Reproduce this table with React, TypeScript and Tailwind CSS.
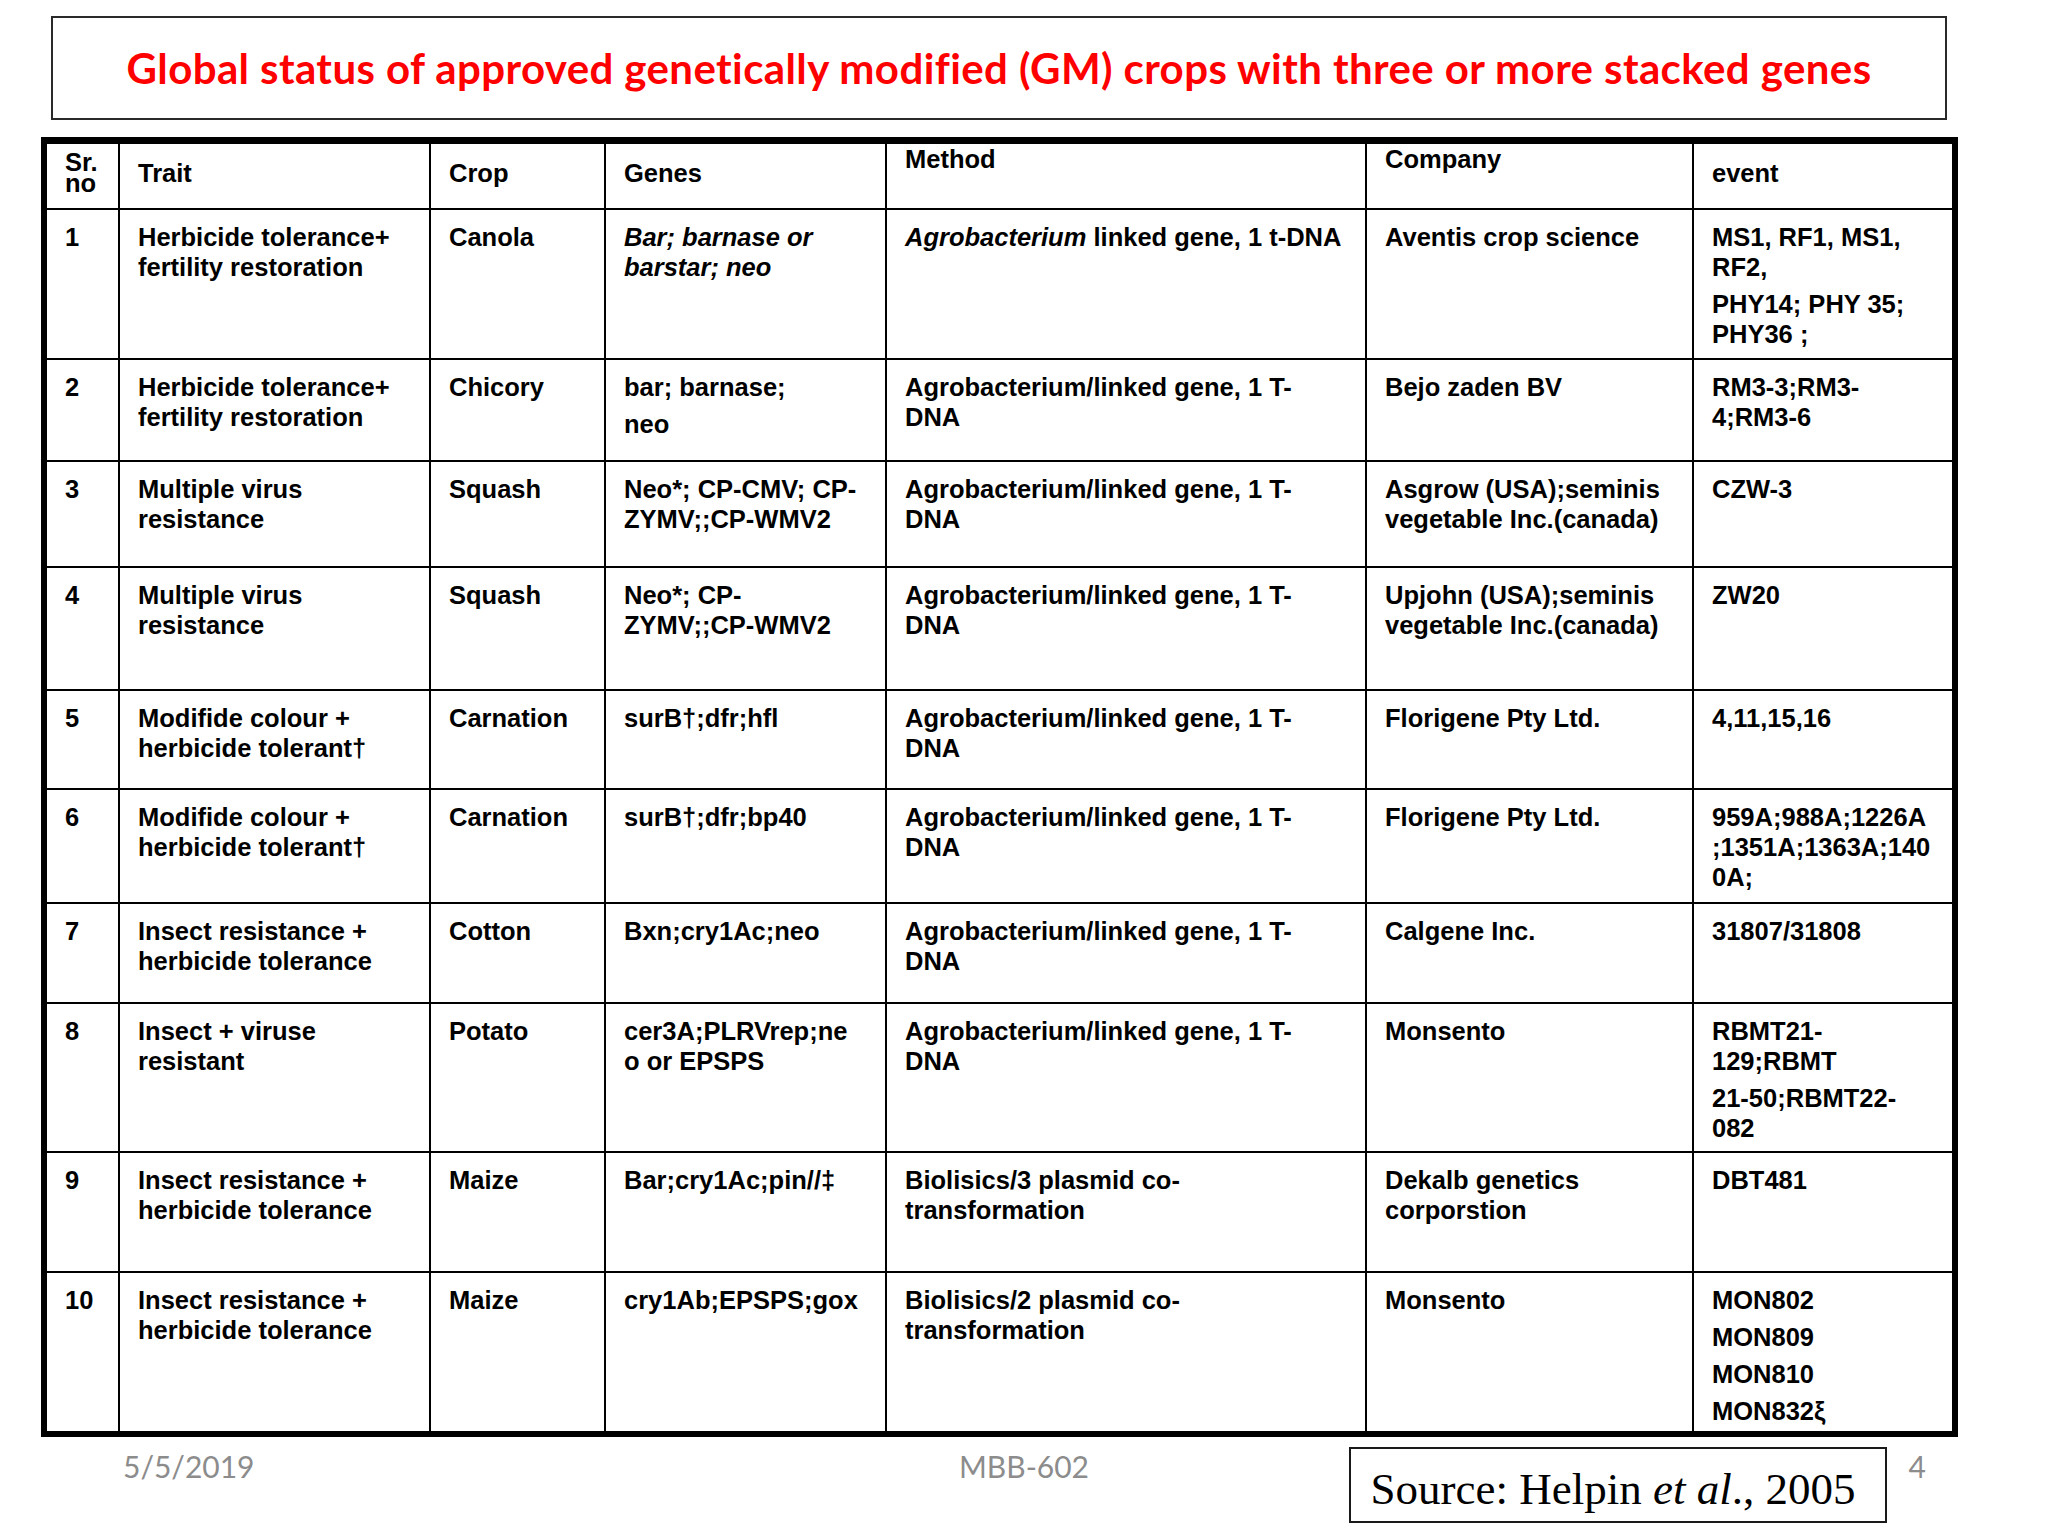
import React from "react";

type Para = React.ReactNode[];
type CellData = Para[];

const L = (...lines: React.ReactNode[]): CellData => [lines];
const Ps = (...paras: React.ReactNode[][]): CellData => paras;

function Cell({ data }: { data: CellData }) {
  return (
    <div className="bg-white pl-[18px] pt-[12px] text-[25.5px] leading-[30px] font-bold text-black">
      {data.map((p, i) => (
        <div key={i} className={i > 0 ? "mt-[7px]" : ""}>
          {p.map((l, j) => (
            <div key={j} className="whitespace-nowrap">
              {l}
            </div>
          ))}
        </div>
      ))}
    </div>
  );
}

const AGRO = L("Agrobacterium/linked gene, 1 T-", "DNA");

const rows: CellData[][] = [
  [
    L("1"),
    L("Herbicide tolerance+", "fertility restoration"),
    L("Canola"),
    L(<i>Bar; barnase or</i>, <i>barstar; neo</i>),
    L(
      <>
        <i>Agrobacterium</i> linked gene, 1 t-DNA
      </>
    ),
    L("Aventis crop science"),
    Ps(["MS1, RF1, MS1,", "RF2,"], ["PHY14; PHY 35;", "PHY36 ;"]),
  ],
  [
    L("2"),
    L("Herbicide tolerance+", "fertility restoration"),
    L("Chicory"),
    Ps(["bar; barnase;"], ["neo"]),
    AGRO,
    L("Bejo zaden BV"),
    L("RM3-3;RM3-", "4;RM3-6"),
  ],
  [
    L("3"),
    L("Multiple virus", "resistance"),
    L("Squash"),
    L("Neo*; CP-CMV; CP-", "ZYMV;;CP-WMV2"),
    AGRO,
    L("Asgrow (USA);seminis", "vegetable Inc.(canada)"),
    L("CZW-3"),
  ],
  [
    L("4"),
    L("Multiple virus", "resistance"),
    L("Squash"),
    L("Neo*; CP-", "ZYMV;;CP-WMV2"),
    AGRO,
    L("Upjohn (USA);seminis", "vegetable Inc.(canada)"),
    L("ZW20"),
  ],
  [
    L("5"),
    L("Modifide colour +", "herbicide tolerant†"),
    L("Carnation"),
    L("surB†;dfr;hfl"),
    AGRO,
    L("Florigene Pty Ltd."),
    L("4,11,15,16"),
  ],
  [
    L("6"),
    L("Modifide colour +", "herbicide tolerant†"),
    L("Carnation"),
    L("surB†;dfr;bp40"),
    AGRO,
    L("Florigene Pty Ltd."),
    L("959A;988A;1226A", ";1351A;1363A;140", "0A;"),
  ],
  [
    L("7"),
    L("Insect resistance +", "herbicide tolerance"),
    L("Cotton"),
    L("Bxn;cry1Ac;neo"),
    AGRO,
    L("Calgene Inc."),
    L("31807/31808"),
  ],
  [
    L("8"),
    L("Insect + viruse", "resistant"),
    L("Potato"),
    L("cer3A;PLRVrep;ne", "o or EPSPS"),
    AGRO,
    L("Monsento"),
    Ps(["RBMT21-", "129;RBMT"], ["21-50;RBMT22-", "082"]),
  ],
  [
    L("9"),
    L("Insect resistance +", "herbicide tolerance"),
    L("Maize"),
    L("Bar;cry1Ac;pin//‡"),
    L("Biolisics/3 plasmid co-", "transformation"),
    L("Dekalb genetics", "corporstion"),
    L("DBT481"),
  ],
  [
    L("10"),
    L("Insect resistance +", "herbicide tolerance"),
    L("Maize"),
    L("cry1Ab;EPSPS;gox"),
    L("Biolisics/2 plasmid co-", "transformation"),
    L("Monsento"),
    Ps(["MON802"], ["MON809"], ["MON810"], ["MON832ξ"]),
  ],
];

const headCls =
  "bg-white pl-[18px] text-[25.5px] font-bold text-black whitespace-nowrap";

export default function App() {
  return (
    <div
      className="w-[2048px] h-[1536px] bg-white overflow-hidden"
      style={{ fontFamily: '"Liberation Sans", Arial, sans-serif' }}
    >
      {/* Title box */}
      <div className="ml-[51px] mt-[16px] w-[1896px] h-[104px] border-2 border-[#2a2a2a] flex items-center justify-center">
        <div
          className="text-[#ff0000] font-bold text-[42px] tracking-[0.4px] leading-none whitespace-nowrap [font-variant-ligatures:none]"
          style={{ fontFamily: "Lato, 'Open Sans', sans-serif" }}
        >
          Global status of approved genetically modified (GM) crops with three or more stacked genes
        </div>
      </div>

      {/* Table */}
      <div className="ml-[41px] mt-[17px] w-[1917px] border-[6px] border-t-[7px] border-black bg-black">
        <div className="grid grid-cols-[71px_309px_173px_279px_478px_325px_258px] grid-rows-[64px_148px_100px_104px_121px_97px_112px_98px_147px_118px_158px] gap-[2px] bg-black">
          <div className={`${headCls} pt-[8px] leading-[21px]`}>
            <div>Sr.</div>
            <div>no</div>
          </div>
          <div className={`${headCls} pt-[14px] leading-[30px]`}>Trait</div>
          <div className={`${headCls} pt-[14px] leading-[30px]`}>Crop</div>
          <div className={`${headCls} pt-[14px] leading-[30px]`}>Genes</div>
          <div className={`${headCls} pt-0 leading-[30px]`}>Method</div>
          <div className={`${headCls} pt-0 leading-[30px]`}>Company</div>
          <div className={`${headCls} pt-[14px] leading-[30px]`}>event</div>
          {rows.map((r, i) =>
            r.map((c, j) => <Cell key={`${i}-${j}`} data={c} />)
          )}
        </div>
      </div>

      {/* Footer */}
      <div className="mt-[10px] grid grid-cols-[1fr_auto_1fr] items-start">
        <div
          className="pl-[123px] pt-[4px] text-[30px] leading-[30px] text-[#8c8c8c]"
          style={{ fontFamily: "Lato, 'Open Sans', sans-serif" }}
        >
          5/5/2019
        </div>
        <div
          className="pt-[4px] text-[30px] leading-[30px] text-[#8c8c8c]"
          style={{ fontFamily: "Lato, 'Open Sans', sans-serif" }}
        >
          MBB-602
        </div>
        <div className="flex justify-end items-start pr-[122px]">
          <div
            className="w-[538px] h-[76px] border-2 border-[#1a1a1a] pl-[20px] pt-[17px] text-[45px] leading-[46px] text-black whitespace-nowrap"
            style={{ fontFamily: '"Liberation Serif", "Times New Roman", serif' }}
          >
            Source: Helpin <i>et al</i>., 2005
          </div>
          <div
            className="ml-[22px] pt-[4px] text-[30px] leading-[30px] text-[#8c8c8c]"
            style={{ fontFamily: "Lato, 'Open Sans', sans-serif" }}
          >
            4
          </div>
        </div>
      </div>
    </div>
  );
}
